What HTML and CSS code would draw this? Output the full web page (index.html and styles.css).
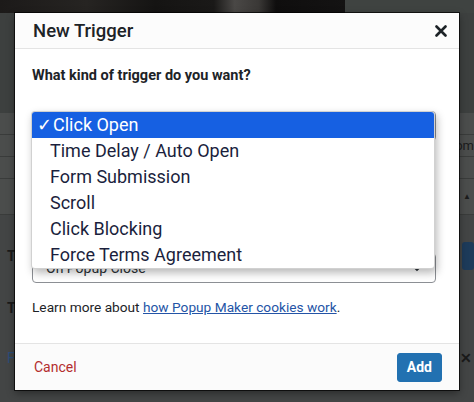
FILE: index.html
```html
<!DOCTYPE html>
<html lang="en">
<head>
  <meta charset="UTF-8">
  <meta name="viewport" content="width=device-width, initial-scale=1.0">
  <title>New Trigger</title>
  <link rel="stylesheet" href="styles.css">
</head>
<body>
  <div class="screen">
    <!-- page behind the overlay -->
    <div class="hero">
      <div class="hero-img"></div>
      <div class="hero-side"></div>
    </div>
    <div class="hero-gap"></div>
    <div class="table">
      <div class="row"><span class="cell-left"></span><span class="cell-right"></span></div>
      <div class="row"><span class="cell-left"></span><span class="cell-right">om</span></div>
      <div class="row"><span class="cell-left"></span><span class="cell-right"></span></div>
      <div class="row tall"><span class="cell-left"></span><span class="cell-right arrow">&#9650;</span></div>
    </div>
    <div class="settings">
      <div class="setting first"><span class="cell-left">T</span><span class="cell-right"><span class="bg-btn"></span></span></div>
      <div class="setting second"><span class="cell-left">T</span><span class="cell-right"></span></div>
      <div class="setting third"><span class="cell-left link">F</span><span class="cell-right">&#10005;</span></div>
    </div>

    <!-- modal -->
    <div class="modal">
      <div class="modal-header">
        <h2>New Trigger</h2>
        <svg class="close" width="12" height="12" viewBox="0 0 12 12"><path d="M1.5 1.5 L10.5 10.5 M10.5 1.5 L1.5 10.5" stroke="#1d2327" stroke-width="2.6" stroke-linecap="round"/></svg>
      </div>
      <div class="modal-body">
        <p class="question">What kind of trigger do you want?</p>
        <div class="trigger-field">
          <div class="select"></div>
          <ul class="dropdown">
            <li class="selected"><span class="check">&#10003;</span>Click Open</li>
            <li>Time Delay / Auto Open</li>
            <li>Form Submission</li>
            <li>Scroll</li>
            <li>Click Blocking</li>
            <li>Force Terms Agreement</li>
          </ul>
        </div>
        <div class="select cookie-select">
          <span>On Popup Close</span>
          <svg class="chevron" width="12" height="8" viewBox="0 0 12 8"><path d="M1.5 1.5 L6 6 L10.5 1.5" fill="none" stroke="#2c3338" stroke-width="1.8"/></svg>
        </div>
        <p class="learn">Learn more about <a href="#">how Popup Maker cookies work</a>.</p>
      </div>
      <div class="modal-footer">
        <a href="#" class="cancel">Cancel</a>
        <button class="add-btn">Add</button>
      </div>
    </div>
  </div>
</body>
</html>
```

FILE: styles.css
```css
* {
  box-sizing: border-box;
}
body {
  margin: 0;
  background-color: #434545;
  font-family: Roboto, 'Liberation Sans', sans-serif;
}
.screen {
  position: relative;
  width: 474px;
  height: 402px;
  overflow: hidden;
  background-color: #434545;
}

/* background page (dimmed) */
.hero {
  display: flex;
  height: 13px;
}
.hero-img {
  width: 345px;
  background: linear-gradient(90deg, #1c1a19 0%, #262422 25%, #151413 45%, #1a1918 62%, #4a4846 68%, #3a3836 75%, #0f0e0e 80%, #141313 100%);
}
.hero-side {
  flex: 1;
  background-color: #3f4341;
}
.hero-gap {
  height: 100px;
  background-color: #3d403f;
}
.table {
  background-color: #4b4d4c;
}
.row {
  display: flex;
  height: 22px;
  border-bottom: 1px solid #3a3c3b;
  font-size: 13px;
  color: #1c1c1c;
}
.row.tall {
  height: 36px;
}
.cell-left {
  width: 460px;
  padding-left: 7px;
}
.cell-right {
  flex: 1;
  display: flex;
  align-items: center;
}
.arrow {
  font-size: 8px;
  padding-left: 3px;
}
.settings {
  color: #1a1a1a;
  font-size: 14px;
  font-weight: 700;
}
.setting {
  display: flex;
  align-items: center;
  height: 30px;
}
.setting.first {
  margin-top: 26px;
}
.setting.second {
  margin-top: 22px;
}
.setting.third {
  margin-top: 20px;
}
.link {
  color: #2b4c78;
  font-weight: 400;
}
.bg-btn {
  display: block;
  width: 12px;
  height: 28px;
  background-color: #1d3b5a;
  border-radius: 3px;
  margin-left: 2px;
}

/* modal window */
.modal {
  position: absolute;
  left: 15px;
  top: 13px;
  width: 444px;
  height: 377px;
  display: flex;
  flex-direction: column;
  background-color: #fff;
  box-shadow: 0 0 0 1px rgba(0, 0, 0, 0.7), 0 3px 8px rgba(0, 0, 0, 0.4);
}
.modal-header {
  display: flex;
  align-items: center;
  justify-content: space-between;
  height: 36px;
  padding: 0 12px 0 18px;
  background-color: #fcfcfc;
  border-bottom: 1px solid #e4e4e4;
}
.modal-header h2 {
  margin: 0;
  font-size: 18.5px;
  font-weight: 500;
  color: #1d2327;
}
.modal-body {
  flex: 1;
  padding: 17px 23px 0 17px;
}
.question {
  margin: 0;
  font-size: 14.5px;
  line-height: 20px;
  font-weight: 700;
  color: #1d2327;
}
.trigger-field {
  position: relative;
  margin-top: 25px;
}
.select {
  display: flex;
  align-items: center;
  justify-content: space-between;
  height: 30px;
  padding: 0 12px 0 13px;
  border: 1px solid #8c8f94;
  border-radius: 4px;
  font-size: 14px;
  color: #2c3338;
  background-color: #fff;
}
.cookie-select {
  margin-top: 112px;
}
.dropdown {
  position: absolute;
  top: 0;
  left: -1px;
  width: 404px;
  margin: 0;
  padding: 0;
  list-style: none;
  background-color: #fff;
  border: 1px solid rgba(0, 0, 0, 0.18);
  border-radius: 4px;
  box-shadow: 2px 4px 8px rgba(0, 0, 0, 0.28);
  z-index: 2;
}
.dropdown li {
  height: 26px;
  line-height: 26px;
  padding-left: 18px;
  font-size: 18px;
  color: #1b1f3d;
}
.dropdown li.selected {
  padding-left: 5px;
  background-color: #1660e2;
  color: #fff;
  border-radius: 3px 3px 0 0;
}
.check {
  display: inline-block;
  width: 16px;
}
.learn {
  margin: 14px 0 0;
  font-size: 13.7px;
  line-height: 20px;
  color: #1d2327;
}
.learn a {
  color: #2454a6;
}
.modal-footer {
  display: flex;
  align-items: center;
  justify-content: space-between;
  height: 47px;
  padding: 0 17px 0 19px;
  background-color: #fbfbfb;
  border-top: 1px solid #e4e4e4;
}
.cancel {
  font-size: 14px;
  color: #b32d2e;
  text-decoration: none;
}
.add-btn {
  height: 29px;
  padding: 0 9px;
  border: 1px solid #2271b1;
  border-radius: 3px;
  background-color: #2271b1;
  color: #fff;
  font-family: Roboto, sans-serif;
  font-size: 14px;
  font-weight: 700;
}
```
